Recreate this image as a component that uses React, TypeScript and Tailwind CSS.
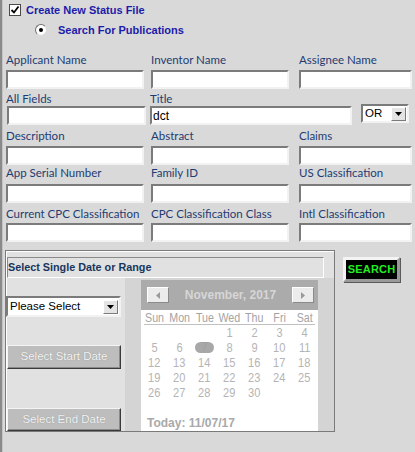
import React from "react";

const LABEL =
  "block h-[14px] leading-[14px] text-[11.5px] text-[#1e3c72] font-['Lato','Liberation_Sans',sans-serif] whitespace-nowrap";
const INSET =
  "bg-white border-2 border-t-[#7b7b7b] border-l-[#7b7b7b] border-b-[#f2f2f2] border-r-[#f2f2f2] h-[19px]";

function Checkbox() {
  return (
    <div className="w-[12px] h-[12px] bg-white border border-[#4a4a4a] flex items-center justify-center">
      <svg width="10" height="10" viewBox="0 0 10 10">
        <path d="M1.5 5 L4 7.5 L8.5 1.5" stroke="#000" strokeWidth="1.8" fill="none" />
      </svg>
    </div>
  );
}

function Radio() {
  return (
    <div className="w-[12px] h-[12px] rounded-full bg-white border border-t-[#6f6f6f] border-l-[#6f6f6f] border-b-[#d8d8d8] border-r-[#d8d8d8] flex items-center justify-center">
      <div className="w-[4px] h-[4px] rounded-full bg-black" />
    </div>
  );
}

function DropBtn() {
  return (
    <div className="w-[15px] h-[14px] bg-[#e4e4e4] border border-t-white border-l-white border-b-[#7a7a7a] border-r-[#7a7a7a] flex items-center justify-center">
      <svg width="7" height="4" viewBox="0 0 7 4">
        <path d="M0 0 H7 L3.5 4 Z" fill="#000" />
      </svg>
    </div>
  );
}

function Select({ text, className }: { text: string; className: string }) {
  return (
    <div className={`${INSET} flex items-center justify-between pl-[2px] pr-[1px] ${className}`}>
      <span className="text-[11.5px] text-black font-['Liberation_Sans',Arial,sans-serif] leading-none">
        {text}
      </span>
      <DropBtn />
    </div>
  );
}

function Field({
  label,
  w,
  className = "",
  inputClass = "",
  gap,
}: {
  label: string;
  w: string;
  className?: string;
  inputClass?: string;
  gap: string;
}) {
  return (
    <div className={`${w} ${className}`}>
      <span className={LABEL}>{label}</span>
      <div className={`${INSET} ${gap} ${inputClass}`} />
    </div>
  );
}

function NavBtn({ dir }: { dir: "l" | "r" }) {
  return (
    <div className="w-[22px] h-[16px] bg-[#ececec] border border-t-white border-l-white border-b-[#8a8a8a] border-r-[#8a8a8a] flex items-center justify-center">
      <svg width="4" height="7" viewBox="0 0 4 7">
        {dir === "l" ? (
          <path d="M4 0 V7 L0 3.5 Z" fill="#9a9a9a" />
        ) : (
          <path d="M0 0 V7 L4 3.5 Z" fill="#9a9a9a" />
        )}
      </svg>
    </div>
  );
}

const WEEKS: (string | null)[][] = [
  [null, null, null, "1", "2", "3", "4"],
  ["5", "6", "7", "8", "9", "10", "11"],
  ["12", "13", "14", "15", "16", "17", "18"],
  ["19", "20", "21", "22", "23", "24", "25"],
  ["26", "27", "28", "29", "30", null, null],
];

const DAYS = ["Sun", "Mon", "Tue", "Wed", "Thu", "Fri", "Sat"];

function Calendar() {
  return (
    <div className="ml-[16px] mt-[2px] w-[177px] h-[151px] flex flex-col font-['Liberation_Sans',Arial,sans-serif]">
      <div className="h-[30px] bg-[#ababab] flex items-center justify-between px-[6px] pr-[4px]">
        <NavBtn dir="l" />
        <span className="text-[12px] font-bold text-[#d6d6d6]">November, 2017</span>
        <NavBtn dir="r" />
      </div>
      <div className="flex-1 bg-white flex flex-col">
        <div className="h-[14px] grid grid-cols-[repeat(7,25px)] pl-[1px] items-center">
          {DAYS.map((d) => (
            <span key={d} className="flex justify-center">
              <span className="inline-block scale-x-[0.82] text-[13px] leading-none text-[#a4a4a4]">
                {d}
              </span>
            </span>
          ))}
        </div>
        <div className="h-[1px] bg-[#c0c0c0] mx-[3px]" />
        {WEEKS.map((wk, i) => (
          <div key={i} className="h-[15px] grid grid-cols-[repeat(7,25px)] pl-[1px] items-center">
            {wk.map((d, j) =>
              d === "7" ? (
                <span key={j} className="flex justify-center">
                  <span className="w-[19px] h-[11px] rounded-full bg-[#a8a8a8] text-[#a0a0a0] text-[12px] leading-[11px] text-center">
                    7
                  </span>
                </span>
              ) : (
                <span key={j} className="flex justify-center">
                  <span className="inline-block scale-x-[0.85] text-[13px] leading-none text-[#b4b4b4]">
                    {d ?? ""}
                  </span>
                </span>
              )
            )}
          </div>
        ))}
        <span className="mt-[16px] ml-[6px] h-[14px] leading-[14px] text-[12px] font-bold text-[#a9a9a9]">
          Today: 11/07/17
        </span>
      </div>
    </div>
  );
}

function GrayBtn({ text, className }: { text: string; className: string }) {
  return (
    <div
      className={`w-[114px] bg-[#bdbdbd] border border-t-[#f4f4f4] border-l-[#f4f4f4] border-b-[#3a3a3a] border-r-[#3a3a3a] shadow-[inset_-1px_-1px_0_#8a8a8a] flex items-center justify-center ${className}`}
    >
      <span className="text-[11.5px] text-[#f3f3f3] font-['Liberation_Sans',Arial,sans-serif] [text-shadow:0_0_1px_#8a8a8a]">
        {text}
      </span>
    </div>
  );
}

export default function App() {
  return (
    <div className="flex w-[415px] h-[452px] bg-[#d9d9d9] overflow-hidden font-['Liberation_Sans',Arial,sans-serif]">
      <div className="w-[2px] bg-[#8a8a8a]" />
      <div className="w-[1px] bg-[#c4c4c4]" />
      <div className="flex-1 flex flex-col">
        <div className="flex items-center mt-[4px] ml-[6px] h-[12px]">
          <Checkbox />
          <span className="ml-[5px] text-[11px] font-bold text-[#1c1caa] whitespace-nowrap">
            Create New Status File
          </span>
        </div>
        <div className="flex items-center mt-[8px] ml-[32px] h-[12px]">
          <Radio />
          <span className="ml-[11px] text-[11px] font-bold text-[#1c1caa] whitespace-nowrap">
            Search For Publications
          </span>
        </div>

        {/* Row 1 */}
        <div className="flex mt-[17px] pl-[3px]">
          <Field label="Applicant Name" w="w-[138px]" gap="mt-[3px]" />
          <Field label="Inventor Name" w="w-[138px]" className="ml-[7px]" gap="mt-[3px]" />
          <Field label="Assignee Name" w="w-[113px]" className="ml-[10px]" gap="mt-[3px]" />
        </div>

        {/* Row 2 */}
        <div className="flex mt-[3px] pl-[3px]">
          <div className="w-[139px]">
            <span className={LABEL}>All Fields</span>
            <div className={`${INSET} ml-[1px] w-[139px]`} />
          </div>
          <div className="ml-[5px]">
            <span className={LABEL}>Title</span>
            <div className="flex">
              <div className={`${INSET} w-[202px] flex items-center pl-[1px]`}>
                <span className="text-[12px] text-black leading-none">dct</span>
              </div>
              <Select text="OR" className="ml-[9px] w-[48px] -mt-[2px]" />
            </div>
          </div>
        </div>

        {/* Row 3 */}
        <div className="flex mt-[4px] pl-[3px]">
          <Field label="Description" w="w-[138px]" gap="mt-[3px]" />
          <Field label="Abstract" w="w-[138px]" className="ml-[7px]" gap="mt-[3px]" />
          <Field label="Claims" w="w-[113px]" className="ml-[10px]" gap="mt-[3px]" />
        </div>

        {/* Row 4 */}
        <div className="flex mt-[1px] pl-[3px]">
          <Field label="App Serial Number" w="w-[138px]" gap="mt-[4px]" />
          <Field label="Family ID" w="w-[138px]" className="ml-[7px]" gap="mt-[4px]" />
          <Field label="US Classification" w="w-[113px]" className="ml-[10px]" gap="mt-[4px]" />
        </div>

        {/* Row 5 */}
        <div className="flex mt-[4px] pl-[3px]">
          <Field label="Current CPC Classification" w="w-[138px]" gap="mt-[2px]" />
          <Field label="CPC Classification Class" w="w-[138px]" className="ml-[7px]" gap="mt-[2px]" />
          <Field label="Intl Classification" w="w-[113px]" className="ml-[10px]" gap="mt-[2px]" />
        </div>

        {/* Date section */}
        <div className="flex mt-[8px]">
          <div className="ml-[2px] w-[330px] h-[182px] bg-[#e1e1e1] border border-[#7a7a7a] shadow-[inset_1px_1px_0_#ffffff] flex flex-col">
            <div className="ml-[1px] mt-[6px] w-[317px] h-[21px] border border-t-[#8a8a8a] border-l-[#8a8a8a] border-b-white border-r-white flex items-center">
              <span className="text-[10.8px] font-bold text-[#17365d] whitespace-nowrap">
                Select Single Date or Range
              </span>
            </div>
            <div className="flex h-[153px]">
              <div className="w-[119px] flex flex-col">
                <Select text="Please Select" className="mt-[18px] w-[115px] h-[21px]" />
                <GrayBtn text="Select Start Date" className="ml-[1px] mt-[28px] h-[24px]" />
                <GrayBtn text="Select End Date" className="ml-[1px] mt-[39px] h-[23px]" />
              </div>
              <div className="flex-1 bg-[#d4d4d4]">
                <Calendar />
              </div>
            </div>
          </div>
          <div className="ml-[8px] mt-[7px] w-[57px] h-[25px] border-[3px] border-t-[#f4f4f4] border-l-[#f4f4f4] border-b-[#9a9a9a] border-r-[#9a9a9a] shadow-[1px_1px_0_#5a5a5a] bg-black flex items-center justify-center">
            <span className="text-[11px] font-bold text-[#22ee22] leading-none tracking-[0.2px]">
              SEARCH
            </span>
          </div>
        </div>
      </div>
    </div>
  );
}
